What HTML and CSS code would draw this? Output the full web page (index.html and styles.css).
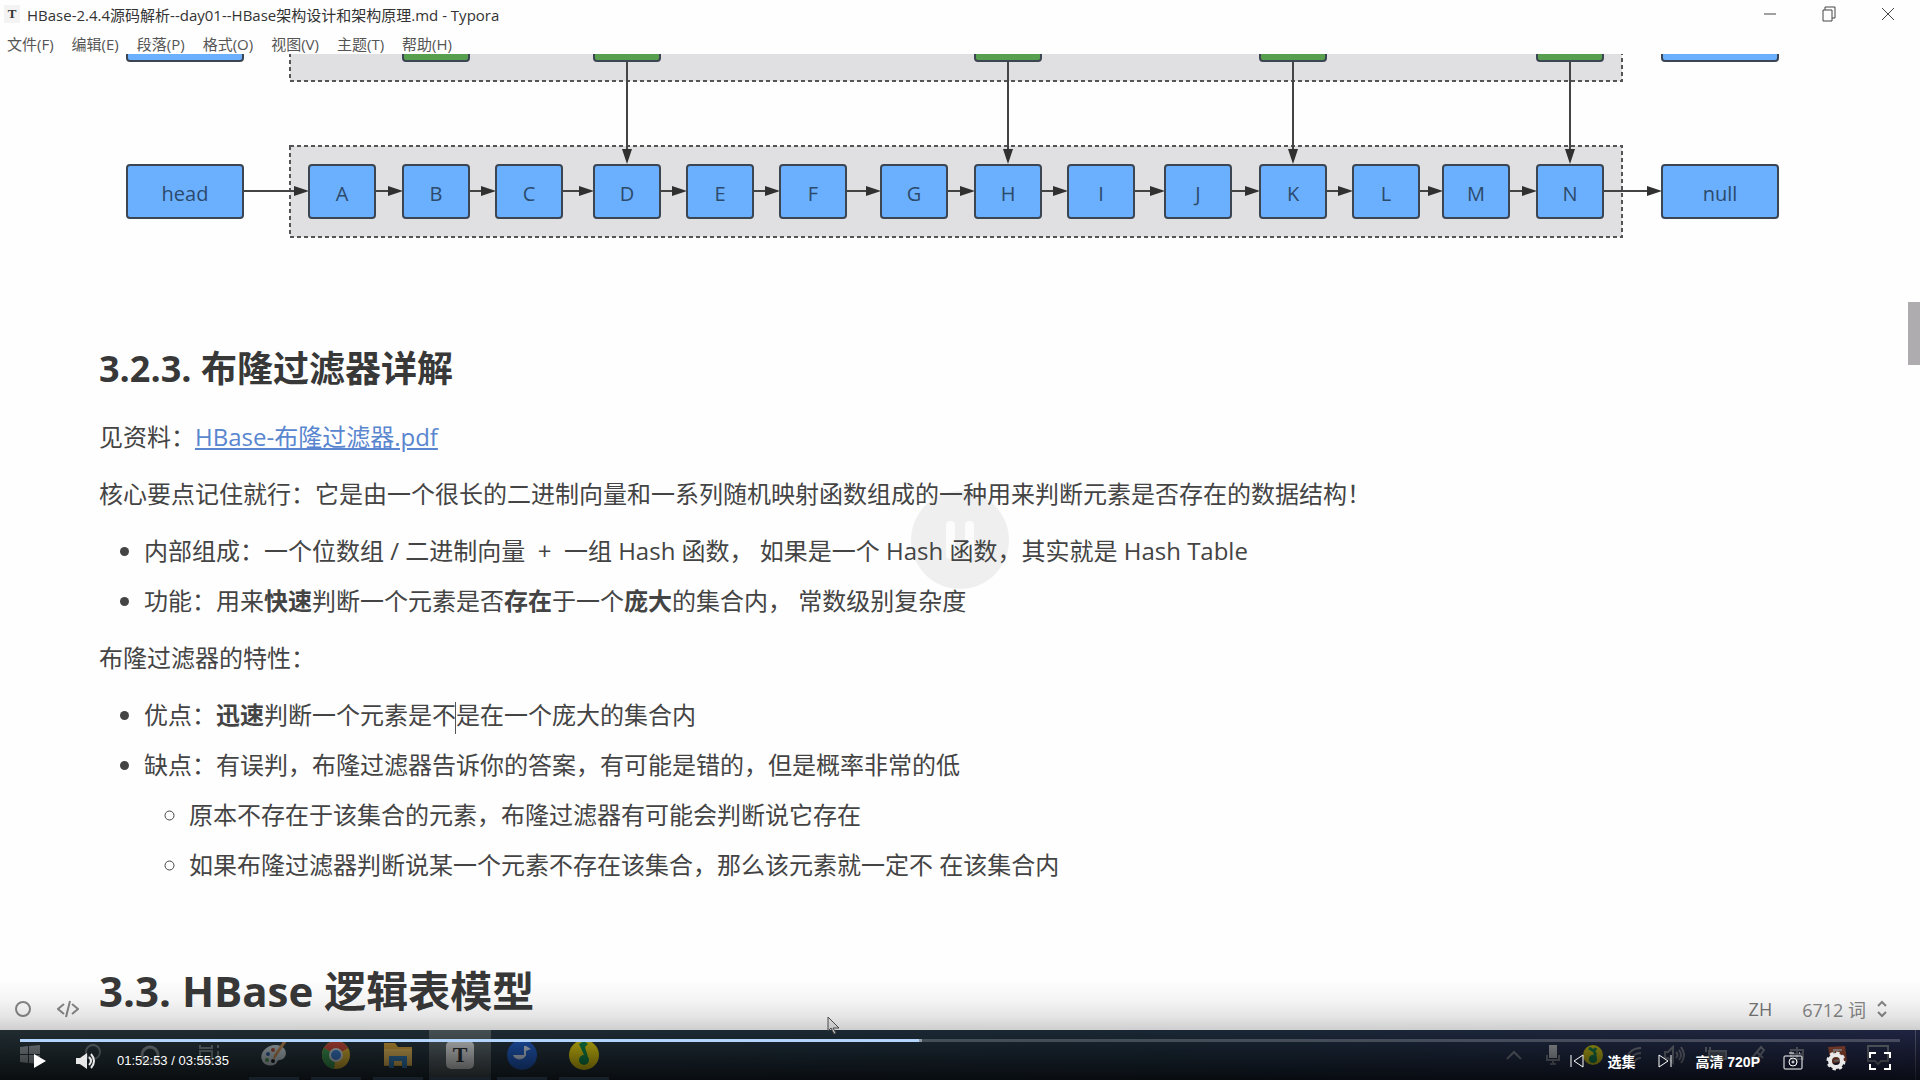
FILE: index.html
```html
<!DOCTYPE html>
<html lang="zh-CN">
<head>
  <meta charset="UTF-8">
  <meta name="viewport" content="width=device-width, initial-scale=1.0">
  <title>HBase-2.4.4源码解析 - Typora</title>
  <link rel="stylesheet" href="styles.css">
</head>
<body>

  <header class="titlebar">
    <span class="app-icon">T</span>
    <span class="title">HBase-2.4.4源码解析--day01--HBase架构设计和架构原理.md - Typora</span>
    <div class="window-buttons">
      <button aria-label="最小化"><svg width="16" height="16" viewBox="0 0 16 16"><path d="M2 8h12"/></svg></button>
      <button aria-label="还原"><svg width="16" height="16" viewBox="0 0 16 16"><path d="M2 4h9v11H2zM4 4V1h10v11h-3"/></svg></button>
      <button aria-label="关闭"><svg width="16" height="16" viewBox="0 0 16 16"><path d="M2 2l12 12M14 2L2 14"/></svg></button>
    </div>
  </header>

  <nav class="menubar">
    <button>文件(F)</button>
    <button>编辑(E)</button>
    <button>段落(P)</button>
    <button>格式(O)</button>
    <button>视图(V)</button>
    <button>主题(T)</button>
    <button>帮助(H)</button>
  </nav>

  <div class="editor">
    <main class="article">
      <svg class="skiplist" id="skiplist" viewBox="99 54 1708 194" role="img" aria-label="skip list"></svg>

      <h3>3.2.3. 布隆过滤器详解</h3>
      <p>见资料：<a href="#">HBase-布隆过滤器.pdf</a></p>
      <p>核心要点记住就行：它是由一个很长的二进制向量和一系列随机映射函数组成的一种用来判断元素是否存在的数据结构！</p>
      <ul>
        <li>内部组成：一个位数组 / 二进制向量&nbsp; +&nbsp; 一组 Hash 函数，&nbsp;如果是一个 Hash 函数，其实就是 Hash Table</li>
        <li>功能：用来<strong>快速</strong>判断一个元素是否<strong>存在</strong>于一个<strong>庞大</strong>的集合内，&nbsp;常数级别复杂度</li>
      </ul>
      <p>布隆过滤器的特性：</p>
      <ul>
        <li>优点：<strong>迅速</strong>判断一个元素是不<span class="caret"></span>是在一个庞大的集合内</li>
        <li>缺点：有误判，布隆过滤器告诉你的答案，有可能是错的，但是概率非常的低
          <ul>
            <li>原本不存在于该集合的元素，布隆过滤器有可能会判断说它存在</li>
            <li>如果布隆过滤器判断说某一个元素不存在该集合，那么该元素就一定不 在该集合内</li>
          </ul>
        </li>
      </ul>
      <h2>3.3. HBase 逻辑表模型</h2>
    </main>
    <div class="scrollbar"><div class="thumb"></div></div>
  </div>

  <footer class="statusbar">
    <button aria-label="侧边栏"><svg width="18" height="18" viewBox="0 0 18 18"><circle cx="9" cy="9" r="7"/></svg></button>
    <button aria-label="源代码模式"><svg width="22" height="18" viewBox="0 0 22 18"><path d="M7 4L1 9l6 5M15 4l6 5-6 5M13 1L9 17"/></svg></button>
    <span class="lang">ZH</span>
    <button class="words">6712 词
      <svg width="12" height="18" viewBox="0 0 12 18"><path d="M2 6l4-4 4 4M2 12l4 4 4-4"/></svg>
    </button>
  </footer>

  <div class="taskbar">
    <div class="cell small">
      <svg width="30" height="30" viewBox="0 0 30 30" fill="#8f999d"><path d="M5 7l8-1v8H5zM14 6l11-1v9H14zM5 15h8v8l-8-1zM14 15h11v9l-11-1z"/></svg>
    </div>
    <div class="cell small">
      <svg width="30" height="30" viewBox="0 0 30 30" fill="none" stroke="#6f7a7f" stroke-width="2"><circle cx="18" cy="12" r="7"/><path d="M13 17l-8 8"/></svg>
    </div>
    <div class="cell small">
      <svg width="30" height="30" viewBox="0 0 30 30" fill="none" stroke="#7f898d" stroke-width="3"><circle cx="15" cy="15" r="8"/></svg>
    </div>
    <div class="cell small">
      <svg width="30" height="30" viewBox="0 0 30 30" fill="none" stroke="#737d82" stroke-width="2"><path d="M5 5v3h12V5M5 25v-3h12v3M5 11h12v8H5zM23 5v3M23 11v14"/></svg>
    </div>
    <div class="cell app">
      <svg width="30" height="30" viewBox="0 0 30 30"><path d="M3 20C0 12 9 4 18 5c9 1 11 9 7 13-3 3-6 1-7 4-1 5-13 5-15-2z" fill="#b9c6cb"/><circle cx="9" cy="14" r="2" fill="#315c9a"/><circle cx="14" cy="10" r="2" fill="#a34d3a"/><circle cx="8" cy="20" r="2" fill="#4d8b50"/><circle cx="14" cy="21" r="2" fill="#172027"/><path d="M28 1L17 17l-3 3 1-5L25 0z" fill="#b98552"/></svg>
    </div>
    <div class="cell app">
      <svg width="30" height="30" viewBox="0 0 30 30"><circle cx="15" cy="15" r="14" fill="#d0ac32"/><path d="M15 15L3 8a14 14 0 0 1 24 0z" fill="#c4493d"/><path d="M15 15L3 8a14 14 0 0 0 10 21z" fill="#3a9452"/><circle cx="15" cy="15" r="7" fill="#c5ced1"/><circle cx="15" cy="15" r="5" fill="#3a7bcb"/></svg>
    </div>
    <div class="cell app">
      <svg width="30" height="30" viewBox="0 0 30 30"><path d="M1 3h11l3 4h14v19H1z" fill="#d09f3a"/><path d="M1 9h28v16H1z" fill="#e0b65a"/><path d="M6 28V16h18v12h-5v-7h-8v7z" fill="#337bb4"/></svg>
    </div>
    <div class="cell app active"><span class="t-tile">T</span></div>
    <div class="cell app">
      <svg width="30" height="30" viewBox="0 0 30 30"><circle cx="15" cy="15" r="15" fill="#2360c8"/><path d="M6 15h13a7 7 0 0 1-13 0zM17 6h2v10h-2zM19 6l5 3-5 2z" fill="#c9d6e6"/></svg>
    </div>
    <div class="cell app">
      <svg width="30" height="30" viewBox="0 0 30 30"><circle cx="15" cy="15" r="15" fill="#e2cf12"/><path d="M15 15L10 4l5-3 4 3-3 3 3 10z" fill="#128a4b"/><circle cx="15" cy="20" r="5" fill="#128a4b"/></svg>
    </div>
    <div class="tray">
      <svg class="chev" width="18" height="20" viewBox="0 0 18 20"><path d="M2 14l7-7 7 7"/></svg>
      <svg width="20" height="20" viewBox="0 0 20 20"><path d="M6 0h8v13H6z" fill="#a9afb4" stroke="none"/><path d="M4 10v5h12v-5M10 15v4M7 19h6"/></svg>
      <svg width="20" height="20" viewBox="0 0 20 20"><circle cx="10" cy="10" r="10" fill="#c2b81a" stroke="none"/><path d="M6 3l5 3 2-3M12 7v5" stroke="#15794a" stroke-width="3"/><circle cx="10" cy="14" r="4" fill="#15794a" stroke="none"/></svg>
      <svg width="20" height="20" viewBox="0 0 20 20"><path d="M3 16C4 8 10 3 18 3M7 17c1-5 5-9 11-9M11 18c1-3 3-5 7-5"/></svg>
      <svg width="22" height="20" viewBox="0 0 22 20"><path d="M2 7h3l5-5v16l-5-5H2zM13 7q3 3 0 6M16 5q4 5 0 10M18 2q6 8 0 16"/></svg>
      <svg width="22" height="20" viewBox="0 0 22 20"><path d="M4 6h17v8H4zM1 2v5M5 2v4" fill="#555d68"/></svg>
      <svg width="20" height="20" viewBox="0 0 20 20"><path d="M4 14L14 2l3 3L8 17zM10 7l6 6M4 12l7 4"/></svg>
      <svg width="20" height="20" viewBox="0 0 20 20"><path d="M10 2v16M3 9h14M4 5h12v9H4z"/></svg>
      <svg width="20" height="20" viewBox="0 0 20 20"><path d="M1 2l17-1 2 15-16 3z" fill="#b0553b" stroke="none"/><path d="M15 5H7v4l8 2v4l-8 1" stroke="#c9bcbc"/></svg>
      <svg width="22" height="22" viewBox="0 0 22 22"><path d="M1 2h20v15h-7l-3 3-3-3H1z"/></svg>
    </div>
    <div class="show-desktop"></div>
  </div>

  <svg class="cursor" width="14" height="20" viewBox="0 0 14 20"><path d="M1 1v14l3-3 3 6 2-1-3-5h6z" fill="#f0f0f0" stroke="#555" stroke-width="1"/></svg>

  <div class="player">
    <div class="progress"><div class="played"></div></div>
    <div class="controls">
      <button class="play" aria-label="播放"><svg width="14" height="16" viewBox="0 0 14 16"><path d="M1 1l12 7-12 7z" fill="#fff"/></svg></button>
      <button class="volume" aria-label="音量"><svg width="22" height="18" viewBox="0 0 22 18"><path d="M1 6h4l7-5v16l-7-5H1z" fill="#e8e8e8"/><path d="M14 5q4 4 0 8M16 2q6 7 0 14" fill="none" stroke="#e8e8e8" stroke-width="2"/></svg></button>
      <span class="time">01:52:53 / 03:55:35</span>
      <div class="right">
        <button aria-label="上一集"><svg width="14" height="16" viewBox="0 0 14 16"><path d="M1 2v12M13 2v12L4 8z"/></svg></button>
        <button>选集</button>
        <button aria-label="下一集"><svg width="14" height="16" viewBox="0 0 14 16"><path d="M13 2v12M1 2v12l9-6z"/></svg></button>
        <button>高清 720P</button>
        <button aria-label="截图"><svg width="20" height="18" viewBox="0 0 20 18"><path d="M6 1h5M13 4h5q1 0 1 1v11q0 1-1 1H2q-1 0-1-1V5q0-1 1-1h11M16 1h1"/><circle cx="10" cy="10" r="4"/><circle cx="10" cy="10" r="1"/></svg></button>
        <button aria-label="设置"><svg width="20" height="20" viewBox="0 0 20 20"><circle cx="10" cy="10" r="6" stroke-width="4" stroke="#e8e8e8"/><circle cx="10" cy="10" r="8" stroke="#e8e8e8" stroke-width="3" stroke-dasharray="3.2 3.08"/></svg></button>
        <button aria-label="全屏"><svg width="22" height="18" viewBox="0 0 22 18"><path d="M1 6V1h6M15 1h6v5M21 12v5h-6M7 17H1v-5" stroke-width="2"/></svg></button>
      </div>
    </div>
  </div>

  <div class="pause"><span></span><span></span></div>

  <script>
    // bottom level of the skip list: [label, x]
    const nodes = [
      ["A", 309], ["B", 403], ["C", 496], ["D", 594], ["E", 687], ["F", 780], ["G", 881],
      ["H", 975], ["I", 1068], ["J", 1165], ["K", 1260], ["L", 1353], ["M", 1443], ["N", 1537]
    ];
    const upper = ["B", "D", "H", "K", "N"];
    const W = 66, TOP = 165, H = 53, MID = 191;

    function box(x, y, w, cls) {
      return `<rect class="${cls}" x="${x}" y="${y}" width="${w}" height="${H}" rx="3"/>`;
    }

    function arrowRight(x1, x2) {
      return `<path class="line" d="M${x1} ${MID}H${x2 - 14}"/>
        <path class="tip" d="M${x2 - 15} ${MID - 5}L${x2} ${MID}L${x2 - 15} ${MID + 5}z"/>`;
    }

    let out = `<rect class="level" x="290" y="-10" width="1332" height="91"/>
      <rect class="level" x="290" y="146" width="1332" height="91"/>`;

    [127, 1662].forEach(x => {
      out += box(x, 8, 116, "blue") + box(x, TOP, 116, "blue");
    });
    out += `<text x="185" y="201">head</text><text x="1720" y="201">null</text>`;

    let prev = 243;
    nodes.forEach(([label, x]) => {
      const cx = x + W / 2;
      out += arrowRight(prev, x) + box(x, TOP, W, "blue");
      out += `<text x="${cx}" y="201">${label}</text>`;
      if (upper.includes(label)) {
        out += box(x, 8, W, "green");
        if (label !== "B") {
          out += `<path class="line" d="M${cx} 62V150"/>
            <path class="tip" d="M${cx - 5} 149h10L${cx} 164z"/>`;
        }
      }
      prev = x + W;
    });
    out += arrowRight(prev, 1662);

    document.getElementById("skiplist").innerHTML = out;
  </script>

</body>
</html>
```
FILE: styles.css
```css
* {
  box-sizing: border-box;
}

body {
  margin: 0;
  height: 100vh;
  display: flex;
  flex-direction: column;
  overflow: hidden;
  position: relative;
  background: #fefefe;
  color: #444;
  font-family: "Open Sans", "Noto Sans CJK SC", sans-serif;
}

button {
  padding: 0;
  border: none;
  background: none;
  color: inherit;
  font: inherit;
  display: flex;
  align-items: center;
}

svg {
  display: block;
}

/* window chrome */
.titlebar {
  display: flex;
  align-items: center;
  height: 28px;
  padding: 0 24px 0 4px;
  font-size: 15px;
  color: #333;
}

.app-icon {
  width: 16px;
  margin-right: 7px;
  background: #f3f3f3;
  text-align: center;
  font: bold 13px/18px "Liberation Serif", serif;
}

.window-buttons {
  display: flex;
  gap: 43px;
  margin-left: auto;
}

.window-buttons svg {
  fill: none;
  stroke: #444;
  stroke-width: 1;
}

.menubar {
  display: flex;
  gap: 18px;
  height: 26px;
  padding: 4px 7px 0;
  font-size: 15px;
  color: #555;
}

/* document */
.editor {
  flex: 1;
  min-height: 0;
  display: flex;
  overflow: hidden;
}

.article {
  flex: 1;
  padding: 0 101px 0 99px;
  font-size: 24px;
  line-height: 38px;
}

.skiplist {
  width: 100%;
}

.skiplist .level {
  fill: #e0dfe1;
  stroke: #555;
  stroke-width: 2;
  stroke-dasharray: 4 3;
}

.skiplist .blue,
.skiplist .green {
  fill: #6bb0ff;
  stroke: #3c4652;
  stroke-width: 2;
}

.skiplist .green {
  fill: #579e4e;
}

.skiplist .line {
  fill: none;
  stroke: #444;
  stroke-width: 2;
}

.skiplist .tip {
  fill: #303030;
}

.skiplist text {
  fill: #2c4a6b;
  font-size: 20px;
  text-anchor: middle;
}

h2,
h3 {
  margin: 0;
  color: #383838;
  font-weight: bold;
}

h3 {
  margin-top: 96px;
  font-size: 36px;
  line-height: 50px;
}

h2 {
  margin-top: 81px;
  font-size: 42px;
  line-height: 52px;
}

p,
ul {
  margin: 19px 0;
}

h3 + p {
  margin-top: 24px;
}

ul {
  padding-left: 45px;
}

li + li,
li > ul {
  margin: 12px 0 0;
}

a {
  color: #5a86cf;
}

.caret {
  display: inline-block;
  width: 1px;
  height: 32px;
  margin-left: -1px;
  vertical-align: middle;
  background: #555;
}

.scrollbar {
  width: 12px;
  padding-top: 248px;
}

.thumb {
  height: 63px;
  background: #aeacae;
}

/* status line lies over the end of the document */
.statusbar {
  position: absolute;
  left: 0;
  right: 0;
  bottom: 50px;
  height: 42px;
  padding: 0 32px 0 14px;
  display: flex;
  align-items: center;
  gap: 25px;
  color: #888;
  font-size: 18px;
}

.statusbar svg {
  fill: none;
  stroke: #888;
  stroke-width: 2;
}

.lang {
  margin-left: auto;
  margin-right: 5px;
  color: #777;
}

.words {
  gap: 10px;
}

/* recorded desktop taskbar */
.taskbar {
  height: 50px;
  flex: none;
  display: flex;
  align-items: stretch;
  background: linear-gradient(90deg, #28363c, #1f3040 60%, #262c50);
}

.cell {
  display: flex;
  align-items: center;
  justify-content: center;
}

.small {
  width: 60px;
}

.app {
  width: 50px;
  margin: 0 6px;
  box-shadow: inset 0 -3px #547699;
}

.small + .app {
  margin-left: 9px;
}

.active {
  width: 62px;
  margin: 0;
  background: #556165;
}

.t-tile {
  width: 28px;
  border-radius: 5px;
  background: #dadcdd;
  color: #2c3236;
  text-align: center;
  font: bold 22px/28px "Liberation Serif", serif;
}

.tray {
  display: flex;
  align-items: center;
  gap: 20px;
  margin-left: auto;
  padding-right: 26px;
}

.tray svg {
  fill: none;
  stroke: #747b86;
  stroke-width: 2;
}

.show-desktop {
  width: 5px;
  border-left: 1px solid #5a6078;
}

.cursor {
  position: absolute;
  left: 827px;
  bottom: 44px;
}

/* video player overlay */
.player {
  position: absolute;
  left: 0;
  right: 0;
  bottom: 0;
  height: 100px;
  padding: 59px 20px 0;
  background: linear-gradient(transparent, rgba(0, 0, 0, 0.04) 20%, rgba(0, 0, 0, 0.1) 37%, rgba(0, 0, 0, 0.19) 50%, rgba(0, 0, 0, 0.75));
  color: #fff;
}

.progress {
  height: 3px;
  background: rgba(255, 255, 255, 0.2);
}

.played {
  width: 48%;
  height: 3px;
  border-right: 3px solid #8d9aa5;
  background: #b3d4fc;
}

.controls {
  display: flex;
  align-items: center;
  height: 37px;
  padding: 0 9px 0 13px;
  font-family: "Liberation Sans", "Noto Sans CJK SC", sans-serif;
}

.volume {
  margin: 0 20px 0 28px;
}

.time {
  font-size: 13px;
}

.right {
  display: flex;
  align-items: center;
  gap: 23px;
  margin-left: auto;
  font-size: 14px;
  font-weight: bold;
}

.right svg {
  fill: none;
  stroke: #fff;
  stroke-width: 1;
}

/* fading pause sign, drawn behind the text */
.pause {
  position: absolute;
  z-index: -1;
  top: 50%;
  left: 50%;
  width: 98px;
  height: 98px;
  margin: -49px;
  display: flex;
  align-items: center;
  justify-content: center;
  gap: 10px;
  border-radius: 50%;
  background: rgba(0, 0, 0, 0.06);
}

.pause span {
  width: 9px;
  height: 38px;
  border-radius: 4px;
  background: rgba(255, 255, 255, 0.8);
}
```
